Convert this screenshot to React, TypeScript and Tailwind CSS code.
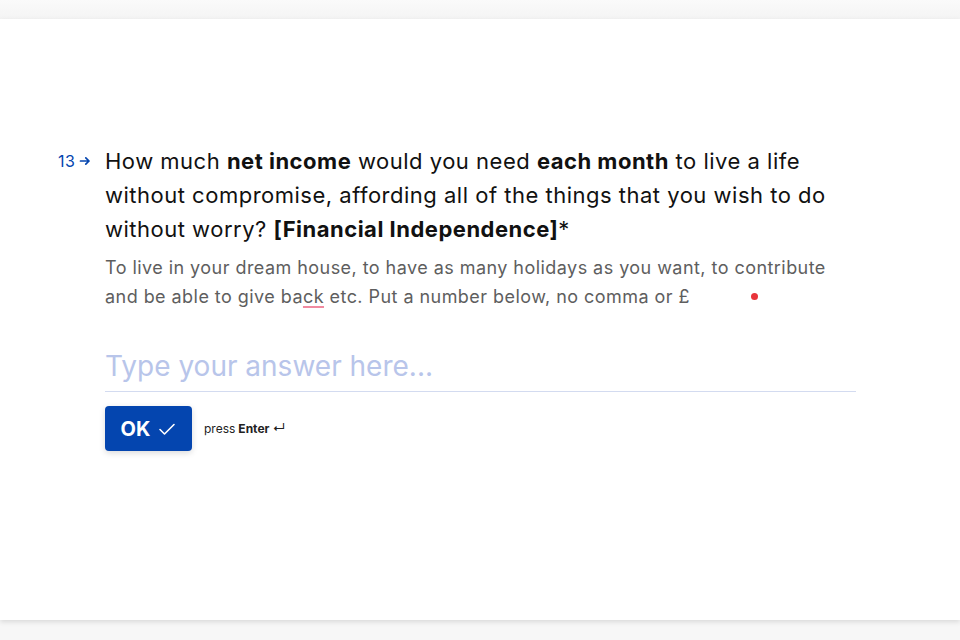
import React from "react";

export default function App() {
  return (
    <div className="w-[960px] h-[640px] overflow-hidden bg-[#f7f7f7] relative" style={{ fontFamily: 'Inter, "Noto Sans", sans-serif' }}>
      <div className="h-[19px] bg-gradient-to-b from-[#fafafa] to-[#f4f4f4]" />
      <div className="h-[601px] bg-white shadow-[0_2px_5px_rgba(0,0,0,0.12)] relative z-10">
        <div className="flex pt-[125px] pl-[58px]">
          <div className="w-[47px] flex items-center h-[34px] text-[#0445af] text-[16px] gap-[4px] tracking-[0.5px]">
            <span>13</span>
            <svg width="12" height="12" viewBox="0 0 12 12" fill="none">
              <path d="M1.5 6h8.5M6.8 2.8L10 6l-3.2 3.2" stroke="#0445af" strokeWidth="1.7" strokeLinecap="round" strokeLinejoin="round" />
            </svg>
          </div>
          <div className="w-[751px]">
            <div className="text-[22px] leading-[34px] text-[#111] tracking-[0.5px]">
              How much <b className="font-bold">net income</b> would you need <b className="font-bold">each month</b> to live a life without compromise, affording all of the things that you wish to do without worry? <b className="font-bold">[Financial Independence]</b>*
            </div>
            <div className="mt-[7px] pr-[24px] text-[18px] leading-[29px] text-[#5e5e5e] tracking-[0.45px]">
              To live in your dream house, to have as many holidays as you want, to contribute and be able to give ba<span className="underline decoration-[#f08aa0] decoration-[1.5px] underline-offset-[3px]">ck</span> etc. Put a number below, no comma or £
            </div>
            <input
              className="mt-[37px] block w-[751px] h-[44px] pb-[7px] border-b border-[#d3dbf0] text-[28px] leading-[36px] text-[#0445af] outline-none placeholder:text-[#b8c5ea] bg-transparent"
              placeholder="Type your answer here..."
            />
            <div className="mt-[14px] flex items-center">
              <button className="w-[87px] h-[45px] rounded-[4px] bg-[#0445af] text-white font-bold text-[20px] flex items-center justify-center gap-[8px] shadow-[0_2px_6px_rgba(0,0,0,0.15)]">
                <span>OK</span>
                <svg width="18" height="14" viewBox="0 0 18 14" fill="none">
                  <path d="M2 7.5l4.5 4.5L16 2.5" stroke="white" strokeWidth="1.6" strokeLinecap="round" strokeLinejoin="round" />
                </svg>
              </button>
              <div className="ml-[12px] text-[12px] text-[#222] flex items-center gap-[3px]">
                <span>press</span>
                <span className="font-bold">Enter</span>
                <span className="text-[13px]">↵</span>
              </div>
            </div>
          </div>
        </div>
        <div className="absolute left-[751px] top-[274px] w-[7px] h-[7px] rounded-full bg-[#e8343a]" />
      </div>
    </div>
  );
}
